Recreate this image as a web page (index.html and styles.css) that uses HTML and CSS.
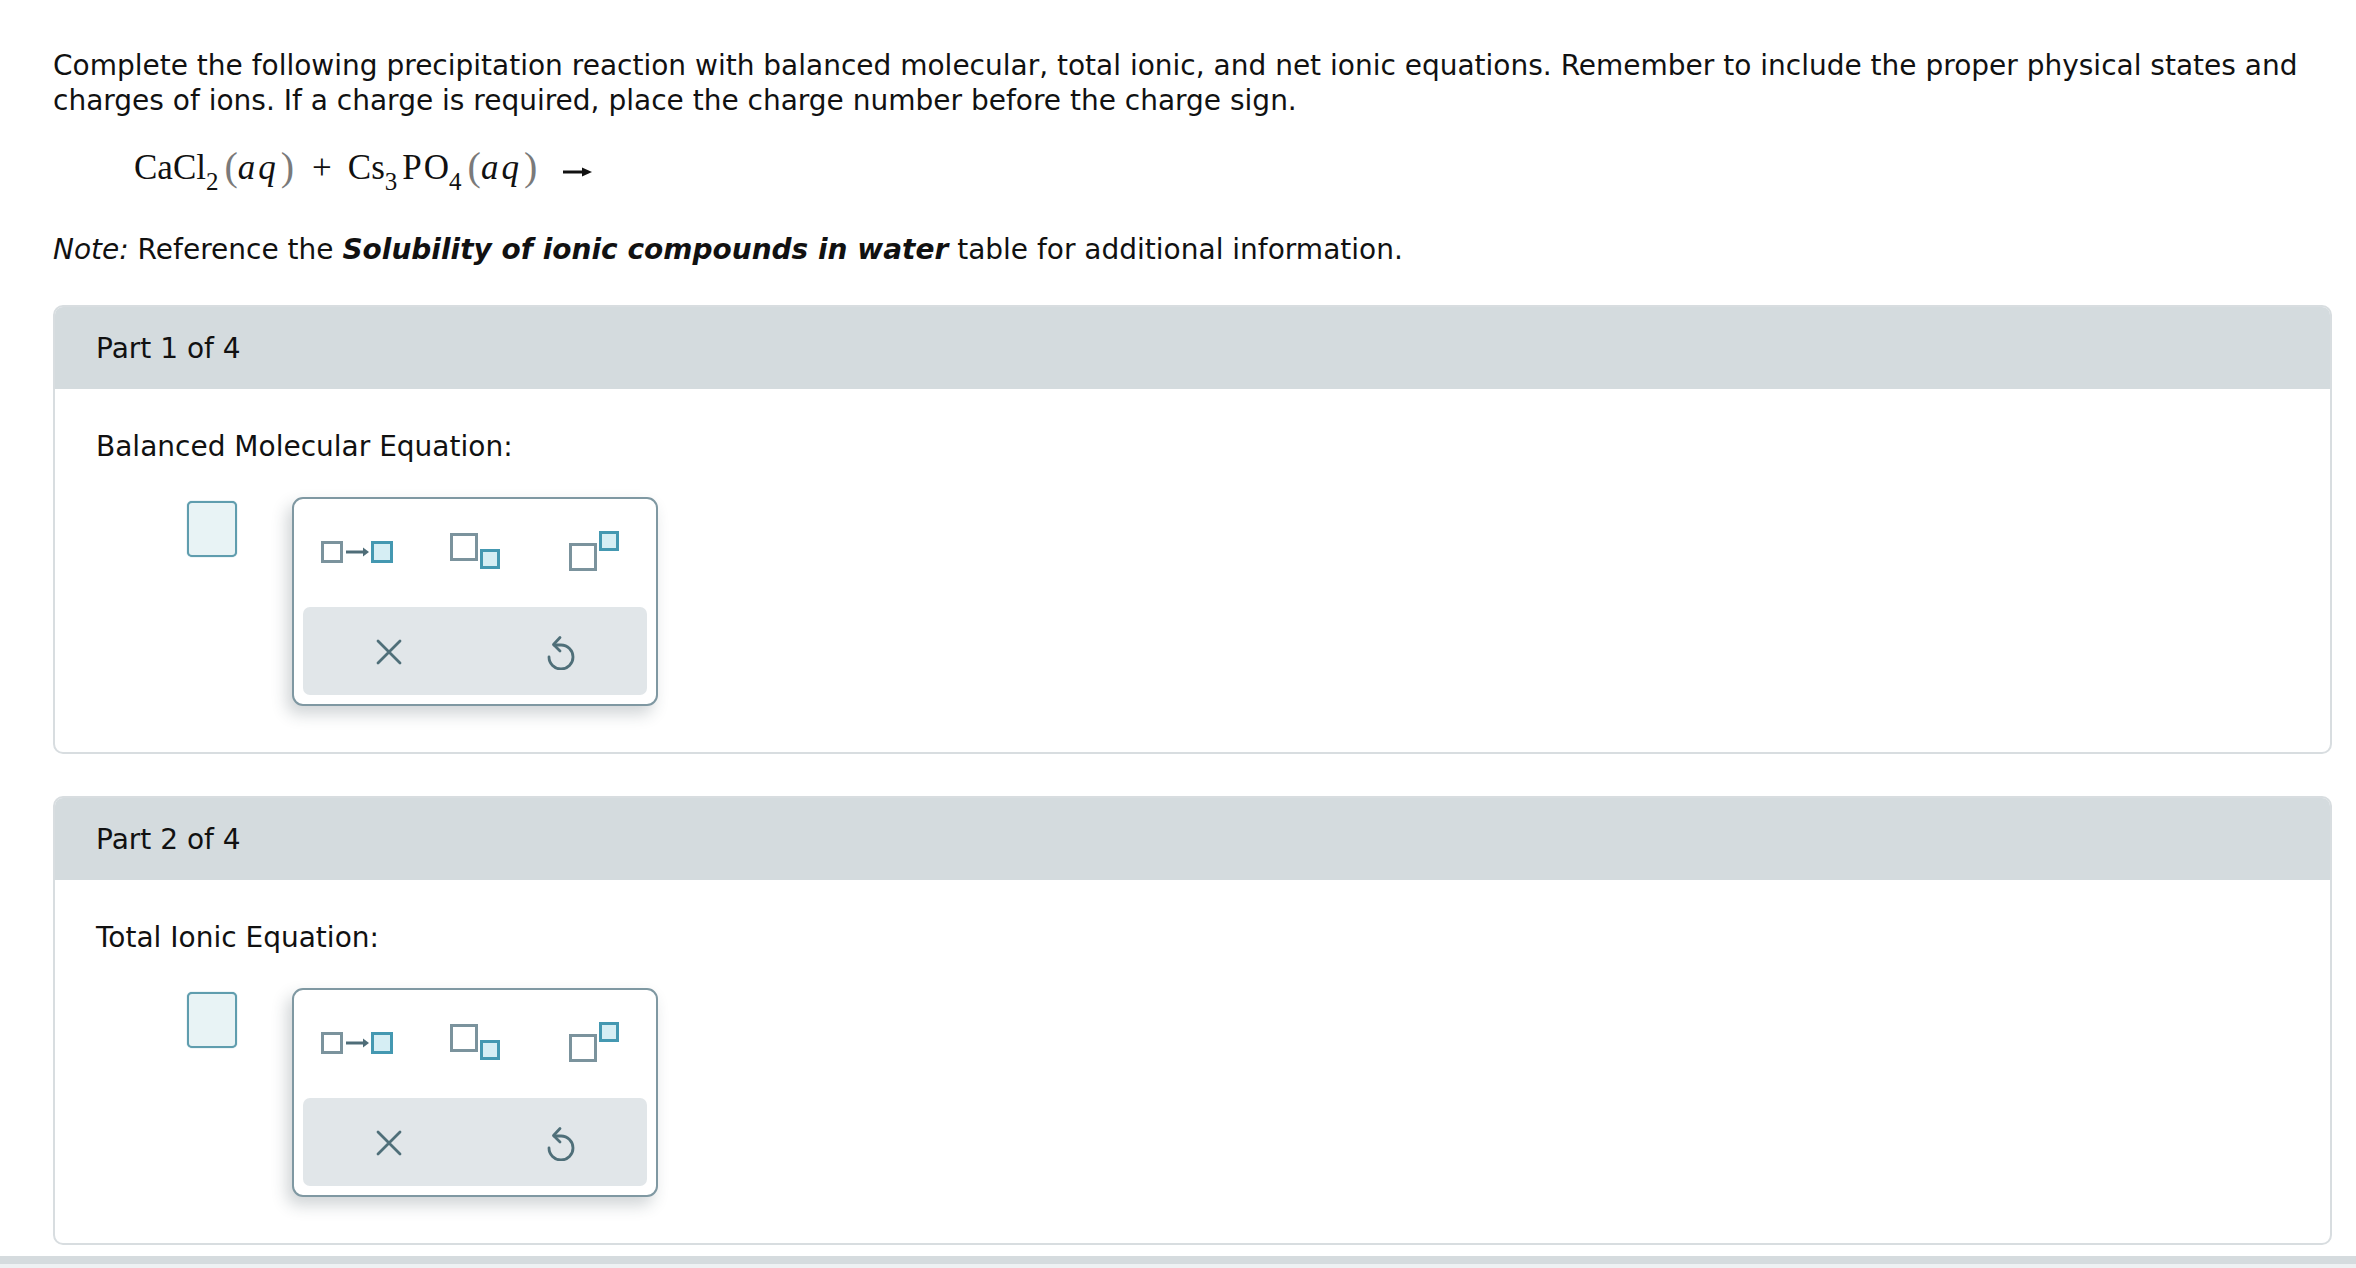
FILE: index.html
```html
<!DOCTYPE html>
<html lang="en">
<head>
<meta charset="utf-8">
<title>Precipitation reaction</title>
<link rel="stylesheet" href="styles.css">
</head>
<body>
<div class="page">
  <p class="prompt">Complete the following precipitation reaction with balanced molecular, total ionic, and net ionic equations. Remember to include the proper physical states and charges of ions. If a charge is required, place the charge number before the charge sign.</p>

  <div class="equation">
    <span class="chem">CaCl<sub>2</sub></span><span class="paren">(</span><i class="st">a</i><i class="st">q</i><span class="paren close">)</span><span class="plus">+</span><span class="chem">Cs<sub>3</sub><span class="p">P</span><span class="o">O</span><sub>4</sub></span><span class="paren">(</span><i class="st">a</i><i class="st">q</i><span class="paren close">)</span><svg class="arrow" width="30" height="14" viewBox="0 0 30 14"><line x1="0" y1="7" x2="21" y2="7" stroke="#111" stroke-width="3"/><polygon points="19,2.5 29,7 19,11.5" fill="#111"/></svg>
  </div>

  <p class="note"><i>Note:</i> Reference the <b><i>Solubility of ionic compounds in water</i></b> table for additional information.</p>

  <section class="card">
    <div class="card-head">Part 1 of 4</div>
    <div class="card-body">
      <div class="label">Balanced Molecular Equation:</div>
      <div class="answer-row">
        <div class="answer-box"></div>
        <div class="palette">
          <div class="tools">
            <button class="tool" type="button">
              <svg width="72" height="22" viewBox="0 0 72 22"><rect x="1.5" y="1.5" width="19" height="19" fill="#fff" stroke="#7b939d" stroke-width="3"/><line x1="25" y1="11" x2="44" y2="11" stroke="#4f6d78" stroke-width="3"/><polygon points="42,6.5 48,11 42,15.5" fill="#4f6d78"/><rect x="51.5" y="1.5" width="19" height="19" fill="#d6eef4" stroke="#4498b1" stroke-width="3"/></svg>
            </button>
            <button class="tool" type="button">
              <svg width="50" height="36" viewBox="0 0 50 36"><rect x="1.5" y="1.5" width="25" height="25" fill="#fff" stroke="#7b939d" stroke-width="3"/><rect x="31.5" y="17.5" width="17" height="17" fill="#d6eef4" stroke="#4498b1" stroke-width="3"/></svg>
            </button>
            <button class="tool" type="button">
              <svg width="50" height="40" viewBox="0 0 50 40"><rect x="1.5" y="13.5" width="25" height="25" fill="#fff" stroke="#7b939d" stroke-width="3"/><rect x="31.5" y="1.5" width="17" height="17" fill="#d6eef4" stroke="#4498b1" stroke-width="3"/></svg>
            </button>
          </div>
          <div class="actions">
            <button class="action" type="button" aria-label="Clear">
              <svg width="26" height="26" viewBox="0 0 26 26"><path d="M2 2 L24 24 M24 2 L2 24" stroke="#4f6f79" stroke-width="2.8" stroke-linecap="round" fill="none"/></svg>
            </button>
            <button class="action" type="button" aria-label="Undo">
              <svg width="28" height="36" viewBox="0 0 28 36"><path d="M2 23 A12 12 0 1 0 14 11 L7 11" stroke="#4f6f79" stroke-width="2.8" stroke-linecap="round" stroke-linejoin="round" fill="none"/><path d="M13 3.5 L6.5 10.5 L13 17" stroke="#4f6f79" stroke-width="2.8" stroke-linecap="round" stroke-linejoin="round" fill="none"/></svg>
            </button>
          </div>
        </div>
      </div>
    </div>
  </section>

  <section class="card">
    <div class="card-head">Part 2 of 4</div>
    <div class="card-body">
      <div class="label">Total Ionic Equation:</div>
      <div class="answer-row">
        <div class="answer-box"></div>
        <div class="palette">
          <div class="tools">
            <button class="tool" type="button">
              <svg width="72" height="22" viewBox="0 0 72 22"><rect x="1.5" y="1.5" width="19" height="19" fill="#fff" stroke="#7b939d" stroke-width="3"/><line x1="25" y1="11" x2="44" y2="11" stroke="#4f6d78" stroke-width="3"/><polygon points="42,6.5 48,11 42,15.5" fill="#4f6d78"/><rect x="51.5" y="1.5" width="19" height="19" fill="#d6eef4" stroke="#4498b1" stroke-width="3"/></svg>
            </button>
            <button class="tool" type="button">
              <svg width="50" height="36" viewBox="0 0 50 36"><rect x="1.5" y="1.5" width="25" height="25" fill="#fff" stroke="#7b939d" stroke-width="3"/><rect x="31.5" y="17.5" width="17" height="17" fill="#d6eef4" stroke="#4498b1" stroke-width="3"/></svg>
            </button>
            <button class="tool" type="button">
              <svg width="50" height="40" viewBox="0 0 50 40"><rect x="1.5" y="13.5" width="25" height="25" fill="#fff" stroke="#7b939d" stroke-width="3"/><rect x="31.5" y="1.5" width="17" height="17" fill="#d6eef4" stroke="#4498b1" stroke-width="3"/></svg>
            </button>
          </div>
          <div class="actions">
            <button class="action" type="button" aria-label="Clear">
              <svg width="26" height="26" viewBox="0 0 26 26"><path d="M2 2 L24 24 M24 2 L2 24" stroke="#4f6f79" stroke-width="2.8" stroke-linecap="round" fill="none"/></svg>
            </button>
            <button class="action" type="button" aria-label="Undo">
              <svg width="28" height="36" viewBox="0 0 28 36"><path d="M2 23 A12 12 0 1 0 14 11 L7 11" stroke="#4f6f79" stroke-width="2.8" stroke-linecap="round" stroke-linejoin="round" fill="none"/><path d="M13 3.5 L6.5 10.5 L13 17" stroke="#4f6f79" stroke-width="2.8" stroke-linecap="round" stroke-linejoin="round" fill="none"/></svg>
            </button>
          </div>
        </div>
      </div>
    </div>
  </section>
</div>
<div class="footer-bar"></div>
</body>
</html>
```

FILE: styles.css
```css
html, body {
  margin: 0;
  padding: 0;
  background: #fff;
}

body {
  font-family: "DejaVu Sans", Verdana, sans-serif;
  color: #111;
}

.page {
  padding: 48px 24px 0 53px;
}

.prompt {
  margin: 0;
  font-size: 28px;
  line-height: 35px;
}

.equation {
  margin: 28px 0 0 81px;
  height: 44px;
  line-height: 44px;
  font-family: "Liberation Serif", "Times New Roman", serif;
  font-size: 35px;
  color: #111;
  white-space: nowrap;
}

.equation sub {
  font-size: 25px;
  line-height: 0;
  vertical-align: -11px;
}

.equation .p {
  margin-left: 5px;
}

.equation .o {
  margin-left: 2px;
}

.equation .paren {
  font-size: 40px;
  color: #7a7a7a;
  line-height: 0;
  margin: 0 0 0 6px;
  vertical-align: -1px;
}

.equation .paren.close {
  margin: 0 0 0 5px;
}

.equation .st + .st {
  margin-left: 3px;
}

.equation .plus {
  margin: 0 16px 0 18px;
}

.equation .arrow {
  margin-left: 26px;
  vertical-align: 0;
}

.note {
  margin: 43px 0 0 0;
  font-size: 28px;
  line-height: 34px;
}

.note b {
  font-weight: bold;
}

.card {
  margin-top: 38px;
  border: 2px solid #d8dde0;
  border-radius: 10px;
  overflow: hidden;
  background: #fff;
}

.card + .card {
  margin-top: 42px;
}

.card-head {
  height: 80px;
  line-height: 80px;
  font-size: 28px;
  background: #d4dbde;
  margin: -2px -2px 0 -2px;
  padding: 4px 0 0 43px;
}

.card-body {
  padding: 40px 41px 46px 41px;
}

.label {
  font-size: 28px;
  line-height: 36px;
}

.answer-row {
  display: flex;
  align-items: flex-start;
  margin-top: 32px;
}

.answer-box {
  margin: 4px 0 0 91px;
  width: 46px;
  height: 52px;
  border: 2px solid #5f9dae;
  border-radius: 5px;
  background: #e8f3f5;
  box-shadow: 0 0 1px #5f9dae;
}

.palette {
  margin-left: 55px;
  width: 344px;
  padding: 0 9px 9px 9px;
  border: 2px solid #7f98a2;
  border-radius: 11px;
  background: #fff;
  box-shadow: -5px 8px 16px rgba(40, 60, 70, 0.22);
}

.tools {
  display: grid;
  grid-template-columns: repeat(3, 1fr);
  height: 108px;
}

.tool,
.action {
  display: flex;
  align-items: center;
  justify-content: center;
  border: 0;
  padding: 0;
  margin: 0;
  background: transparent;
}

.tool svg,
.action svg {
  display: block;
}

.tool:first-child svg {
  margin-right: 6px;
  margin-top: -2px;
}

.tool:nth-child(2) svg {
  margin-top: -4px;
}

.tool:nth-child(3) svg {
  margin-top: -4px;
  margin-left: 8px;
}

.actions {
  display: grid;
  grid-template-columns: 1fr 1fr;
  height: 88px;
  background: #e1e6e9;
  border-radius: 7px;
}

.action svg {
  margin-top: 2px;
}

.footer-bar {
  margin-top: 11px;
  height: 16px;
  border-top: 8px solid #d5dbde;
  background: #eef1f3;
}
```
